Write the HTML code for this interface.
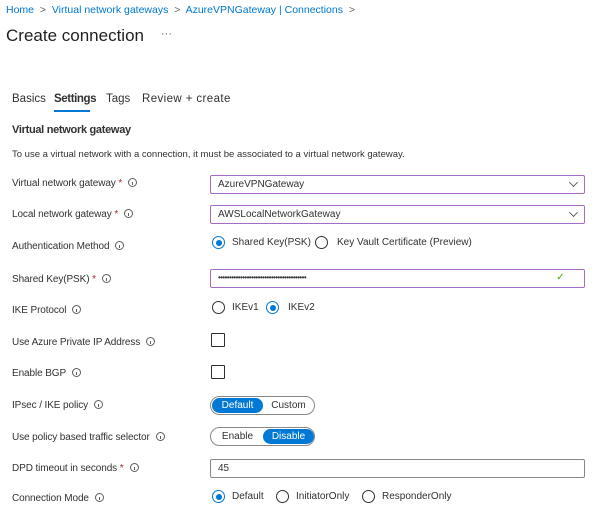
<!DOCTYPE html>
<html><head><meta charset="utf-8"><style>
*{margin:0;padding:0;box-sizing:border-box}
body{width:600px;height:524px;background:#fff;font-family:"Liberation Sans",sans-serif;color:#323130;position:relative;overflow:hidden;font-size:10px}
.a{position:absolute;white-space:nowrap}
.bc{color:#0078d4;font-size:10.5px;top:4px}
.lbl{left:12px;font-size:10px;letter-spacing:-0.1px}
.req{color:#a4262c}
.i{display:inline-block;width:9px;height:9px;border:1px solid #605e5c;border-radius:50%;margin-left:6px;vertical-align:-1px;position:relative}
.i:after{content:"";position:absolute;left:3px;top:3px;width:1px;height:3px;background:#605e5c}
.in{position:absolute;left:210px;width:375px;height:19px;border:1px solid #a66bc5;border-radius:2px;font-size:10px;padding:3px 7px}
.chev{position:absolute;right:7px;width:7px;height:7px;border-right:1px solid #555;border-bottom:1px solid #555;transform:rotate(45deg) scale(.9);top:3px}
.r{position:absolute;width:13px;height:13px;border:1px solid #323130;border-radius:50%}
.r.on{border-color:#0078d4}
.r.on:after{content:"";position:absolute;left:2.5px;top:2.5px;width:6px;height:6px;border-radius:50%;background:#0078d4}
.cb{position:absolute;left:211px;width:14px;height:14px;border:1px solid #323130;border-radius:1px}
.tg{position:absolute;left:210px;width:105px;height:19px;border:1px solid #8a8886;border-radius:10px}
.tg span{position:absolute;top:1px;height:15px;border-radius:8px;font-size:10px;line-height:15px;text-align:center;width:51px}
.tg .on{background:#0078d4;color:#fff}
.tab{top:93px;font-size:11.5px}
</style></head><body>
<div class="a bc" style="left:6px">Home <span style="color:#605e5c">&nbsp;&gt;&nbsp;</span> Virtual network gateways <span style="color:#605e5c">&nbsp;&gt;&nbsp;</span> AzureVPNGateway | Connections <span style="color:#605e5c">&nbsp;&gt;</span></div>
<div class="a" style="left:6px;top:26px;font-size:17px;color:#201f1e">Create connection</div>
<div class="a" style="left:161px;top:28px;font-size:11px;color:#605e5c">···</div>
<div class="a tab" style="left:12px">Basics</div>
<div class="a tab" style="left:54px;font-weight:bold;letter-spacing:-0.4px">Settings</div>
<div class="a" style="left:54px;top:110px;width:36px;height:2px;background:#0078d4"></div>
<div class="a tab" style="left:106px">Tags</div>
<div class="a tab" style="left:142px;letter-spacing:0.4px">Review + create</div>
<div class="a" style="left:12px;top:124px;font-size:11px;font-weight:bold;letter-spacing:-0.3px">Virtual network gateway</div>
<div class="a" style="left:12px;top:149px;font-size:9.5px">To use a virtual network with a connection, it must be associated to a virtual network gateway.</div>

<div class="a lbl" style="top:178px">Virtual network gateway <span class="req">*</span><span class="i"></span></div>
<div class="in" style="top:175px">AzureVPNGateway<div class="chev"></div></div>
<div class="a lbl" style="top:209px">Local network gateway <span class="req">*</span><span class="i"></span></div>
<div class="in" style="top:205px">AWSLocalNetworkGateway<div class="chev"></div></div>
<div class="a lbl" style="top:241px">Authentication Method<span class="i"></span></div>
<div class="r on" style="left:212px;top:236px"></div><div class="a" style="left:232px;top:237px">Shared Key(PSK)</div>
<div class="r" style="left:315px;top:236px"></div><div class="a" style="left:337px;top:237px">Key Vault Certificate (Preview)</div>
<div class="a lbl" style="top:274px">Shared Key(PSK) <span class="req">*</span><span class="i"></span></div>
<div class="in" style="top:269px;font-size:8px;padding-top:3px;letter-spacing:-0.6px">••••••••••••••••••••••••••••••••••••••••<span style="position:absolute;right:20px;top:2px;color:#57a300;font-size:10px">✓</span></div>
<div class="a lbl" style="top:305px">IKE Protocol<span class="i"></span></div>
<div class="r" style="left:212px;top:301px"></div><div class="a" style="left:232px;top:302px">IKEv1</div>
<div class="r on" style="left:266px;top:301px"></div><div class="a" style="left:288px;top:302px">IKEv2</div>
<div class="a lbl" style="top:337px">Use Azure Private IP Address<span class="i"></span></div>
<div class="cb" style="top:333px"></div>
<div class="a lbl" style="top:368px">Enable BGP<span class="i"></span></div>
<div class="cb" style="top:365px"></div>
<div class="a lbl" style="top:400px">IPsec / IKE policy<span class="i"></span></div>
<div class="tg" style="top:396px"><span class="on" style="left:1px">Default</span><span style="left:52px">Custom</span></div>
<div class="a lbl" style="top:432px">Use policy based traffic selector<span class="i"></span></div>
<div class="tg" style="top:427px"><span style="left:1px">Enable</span><span class="on" style="left:52px">Disable</span></div>
<div class="a lbl" style="top:463px">DPD timeout in seconds <span class="req">*</span><span class="i"></span></div>
<div class="in" style="top:459px;border-color:#8a8886">45</div>
<div class="a lbl" style="top:493px">Connection Mode<span class="i"></span></div>
<div class="r on" style="left:212px;top:490px"></div><div class="a" style="left:232px;top:491px">Default</div>
<div class="r" style="left:276px;top:490px"></div><div class="a" style="left:296px;top:491px">InitiatorOnly</div>
<div class="r" style="left:362px;top:490px"></div><div class="a" style="left:382px;top:491px">ResponderOnly</div>
</body></html>
